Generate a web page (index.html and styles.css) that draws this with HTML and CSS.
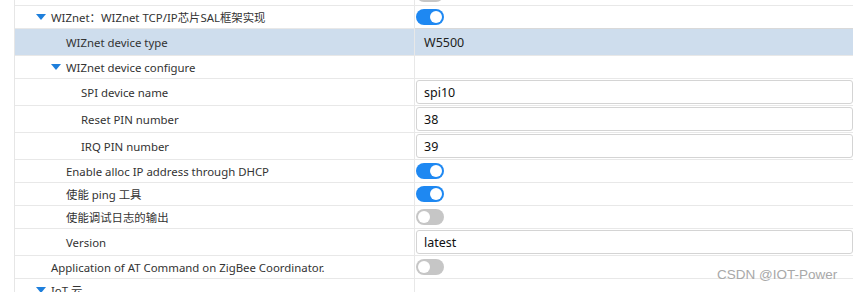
FILE: index.html
```html
<!DOCTYPE html>
<html><head>
<meta charset="utf-8">
<title>RT-Thread Settings</title>
<link rel="stylesheet" href="styles.css">
</head>
<body>
  <div class="tree">
    <div class="row">
      <div class="name lv1"></div>
      <div class="value"><span class="switch"></span></div>
    </div>
    <div class="row">
      <div class="name lv1"><span class="caret"></span>WIZnet：WIZnet TCP/IP芯片SAL框架实现</div>
      <div class="value"><span class="switch on"></span></div>
    </div>
    <div class="row tall selected">
      <div class="name lv2">WIZnet device type</div>
      <div class="value"><span class="text">W5500</span></div>
    </div>
    <div class="row">
      <div class="name lv2"><span class="caret"></span>WIZnet device configure</div>
      <div class="value"></div>
    </div>
    <div class="row tall">
      <div class="name lv3">SPI device name</div>
      <div class="value"><input class="field" value="spi10"></div>
    </div>
    <div class="row tall">
      <div class="name lv3">Reset PIN number</div>
      <div class="value"><input class="field" value="38"></div>
    </div>
    <div class="row tall">
      <div class="name lv3">IRQ PIN number</div>
      <div class="value"><input class="field" value="39"></div>
    </div>
    <div class="row">
      <div class="name lv2">Enable alloc IP address through DHCP</div>
      <div class="value"><span class="switch on"></span></div>
    </div>
    <div class="row">
      <div class="name lv2">使能 ping 工具</div>
      <div class="value"><span class="switch on"></span></div>
    </div>
    <div class="row">
      <div class="name lv2">使能调试日志的输出</div>
      <div class="value"><span class="switch"></span></div>
    </div>
    <div class="row tall">
      <div class="name lv2">Version</div>
      <div class="value"><input class="field" value="latest"></div>
    </div>
    <div class="row">
      <div class="name lv1">Application of AT Command on ZigBee Coordinator.</div>
      <div class="value"><span class="switch"></span></div>
    </div>
    <div class="row">
      <div class="name lv1"><span class="caret"></span>IoT 云</div>
      <div class="value"></div>
    </div>
  </div>
  <div class="watermark">CSDN @IOT-Power</div>
</body></html>
```

FILE: styles.css
```css
body {
  margin: 0;
  padding: 0;
  font-family: "Noto Sans", "Noto Sans CJK SC", sans-serif;
  font-size: 11.4px;
  color: #333;
  background: #fff;
  overflow: hidden;
  position: relative;
  height: 292px;
}
.tree {
  margin: -17px 0 0 14px;
  border-left: 1px solid #e6e6e6;
}
.row {
  display: flex;
  height: 22px;
  border-bottom: 1px solid #e8e8e8;
}
.row.tall {
  height: 26px;
}
.row.selected {
  background-color: #cedded;
}
.name {
  width: 400px;
  box-sizing: border-box;
  flex: none;
  display: flex;
  align-items: center;
  border-right: 1px solid #e8e8e8;
  white-space: nowrap;
}
.lv1 { padding-left: 36px; }
.lv2 { padding-left: 51px; }
.lv3 { padding-left: 66px; }
.name .caret {
  width: 15px;
  margin-left: -15px;
  flex: none;
  display: flex;
  align-items: center;
}
.name .caret::before {
  content: "";
  border-left: 5px solid transparent;
  border-right: 5px solid transparent;
  border-top: 6px solid #1e7fdc;
}
.value {
  flex: 1;
  display: flex;
  align-items: center;
  padding-left: 1px;
  min-width: 0;
}
.value .text {
  padding-left: 8px;
  font-size: 12.5px;
  color: #222;
}
.selected .value {
  border-top: 1px solid #d9d9d9;
  margin-top: -1px;
}
.field {
  width: 460px;
  height: 24px;
  box-sizing: border-box;
  margin: 0;
  border: 1px solid #d4d4d4;
  border-radius: 3px;
  padding: 0 7px;
  font-family: inherit;
  font-size: 12.5px;
  color: #111;
  background: #fff;
  outline: none;
}
.switch {
  width: 28px;
  height: 16px;
  border-radius: 8px;
  background-color: #c6c6c6;
  position: relative;
  display: inline-block;
}
.switch::after {
  content: "";
  position: absolute;
  top: 2px;
  left: 2px;
  width: 12px;
  height: 12px;
  border-radius: 50%;
  background: #fff;
}
.switch.on {
  background-color: #1e88f2;
}
.switch.on::after {
  left: 14px;
}
.watermark {
  position: absolute;
  left: 717px;
  top: 267px;
  font-family: "Liberation Sans", sans-serif;
  font-size: 13.5px;
  color: #a8a8a8;
}
```
